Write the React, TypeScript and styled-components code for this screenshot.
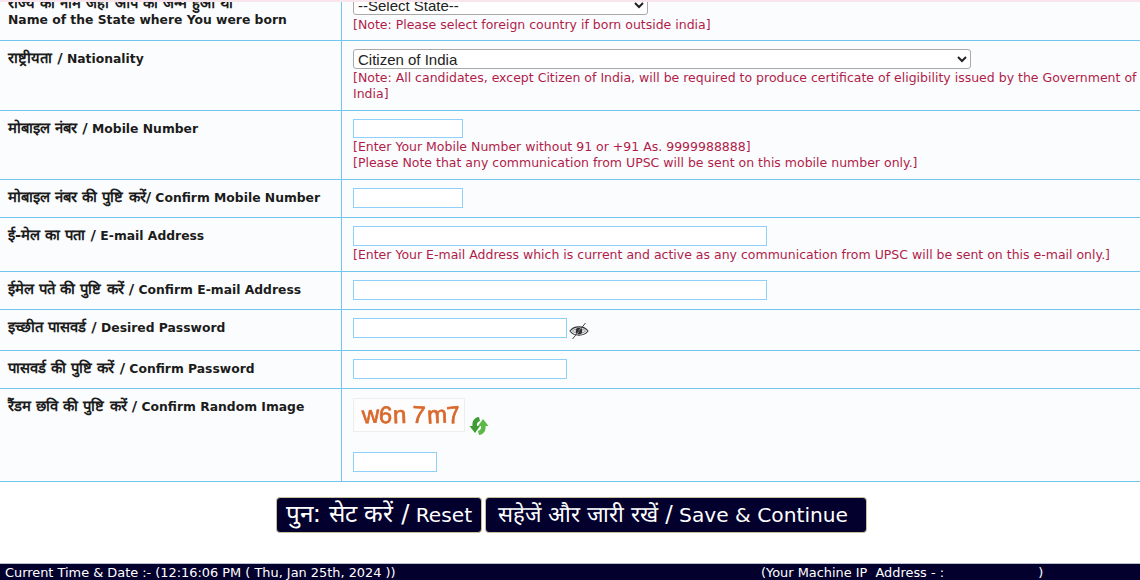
import { createGlobalStyle } from 'styled-components';
import styled from 'styled-components';

const GlobalStyle = createGlobalStyle`
  html, body {
    margin: 0;
    padding: 0;
    background: #fff;
    overflow: hidden;
  }
  body {
    font-family: "DejaVu Sans", Verdana, sans-serif;
  }
`;

const Page = styled.div`
  width: 1140px;
  height: 580px;
  display: flex;
  flex-direction: column;
  overflow: hidden;
`;
const TopStrip = styled.div`
  height: 2px;
  background: #f8e6ec;
`;
const Table = styled.div`
  background: #fbfcfd;
`;
const Row = styled.div<{ $h: number }>`
  display: grid;
  grid-template-columns: 342px 1fr;
  height: ${(p) => p.$h}px;
  box-sizing: border-box;
  border-bottom: 1px solid #72c5ee;
  overflow: hidden;
`;
const LabelCell = styled.div`
  box-sizing: border-box;
  padding: 9px 0 0 8px;
  border-right: 1px solid #72c5ee;
  font-size: 12.35px;
  line-height: 18px;
  font-weight: bold;
  color: #1c1c1c;
`;
const ClippedLabel = styled(LabelCell)`
  margin-top: -6px;
  padding-top: 0;
  line-height: 16px;
`;
const Hi = styled.span<{ $scale?: number }>`
  font-size: ${(p) => p.$scale ?? 1.2}em;
  line-height: 1;
`;
const FieldCell = styled.div`
  padding: 8px 0 0 11px;
`;
const ClippedField = styled(FieldCell)`
  margin-top: -7px;
  padding-top: 0;
`;
const Select = styled.select<{ $w: number }>`
  display: block;
  width: ${(p) => p.$w}px;
  height: 20px;
  box-sizing: border-box;
  padding: 0 0 1px;
  font-family: "Liberation Sans", Arial, sans-serif;
  font-size: 15px;
  color: #222;
  background: #fff;
  border: 1px solid #a9a9a9;
  border-radius: 3px;
`;
const TextInput = styled.input<{ $w: number; $h?: number }>`
  display: block;
  width: ${(p) => p.$w}px;
  height: ${(p) => p.$h ?? 20}px;
  box-sizing: border-box;
  padding: 0 2px;
  background: #fff;
  border: 1px solid #8fd0f8;
  outline: none;
`;
const Note = styled.div<{ $gap?: number }>`
  margin-top: ${(p) => p.$gap ?? 1}px;
  font-size: 12.5px;
  line-height: 16px;
  color: #b01c4a;
  white-space: pre-line;
`;
const PasswordLine = styled.div`
  display: flex;
  align-items: flex-start;
  gap: 2px;
`;
const EyeIcon = styled.svg`
  margin-top: 4px;
  width: 20px;
  height: 18px;
`;
const CaptchaLine = styled.div`
  display: flex;
  align-items: flex-end;
  gap: 4px;
  height: 36px;
`;
const Captcha = styled.div`
  width: 112px;
  height: 34px;
  box-sizing: border-box;
  margin-bottom: 1px;
  padding-left: 4px;
  background: #fdfdfd;
  border: 1px solid #eeeeee;
  display: flex;
  align-items: center;
  justify-content: center;
  color: #d9692c;
  font-family: "Liberation Sans", Arial, sans-serif;
  font-size: 24px;
  -webkit-text-stroke: 0.7px #d9692c;
  filter: blur(0.3px);
`;
const CaptchaChar = styled.span<{ $tilt: number; $gap?: number }>`
  display: inline-block;
  transform: rotate(${(p) => p.$tilt}deg);
  margin-left: ${(p) => p.$gap ?? 0}px;
`;
const RefreshIcon = styled.svg`
  width: 20px;
  height: 20px;
  margin-bottom: -3px;
`;
const CaptchaInput = styled(TextInput)`
  margin-top: 19px;
`;
const Actions = styled.div`
  height: 82px;
  box-sizing: border-box;
  padding: 15px 0 0 3px;
  display: flex;
  justify-content: center;
  align-items: flex-start;
  gap: 3px;
`;
const ActionButton = styled.button<{ $w: number; $right?: number }>`
  width: ${(p) => p.$w}px;
  height: 36px;
  padding: 0 ${(p) => p.$right ?? 0}px 0 0;
  background: #03002e;
  color: #fff;
  border: 1px solid #c9bf9a;
  border-radius: 4px;
  font-family: "DejaVu Sans", Verdana, sans-serif;
  font-size: 20.2px;
  white-space: nowrap;
`;
const Footer = styled.div`
  height: 16px;
  display: grid;
  grid-template-columns: 761px 1fr;
  background: #03002e;
  border-top: 1px solid #b8c0d0;
  color: #fff;
  font-size: 12.9px;
  line-height: 17px;
  white-space: pre;
`;
const FooterLeft = styled.div`
  padding-left: 5px;
`;

const App = () => {
  return (
    <Page>
      <GlobalStyle />
      <TopStrip />
      <Table>
        <Row $h={39}>
          <ClippedLabel>
            <Hi>राज्य का नाम जहां आप का जन्म हुआ था</Hi>
            <br />
            Name of the State where You were born
          </ClippedLabel>
          <ClippedField>
            <Select $w={295} defaultValue="s">
              <option value="s">--Select State--</option>
            </Select>
            <Note $gap={2}>[Note: Please select foreign country if born outside india]</Note>
          </ClippedField>
        </Row>
        <Row $h={70}>
          <LabelCell><Hi>राष्ट्रीयता /</Hi> Nationality</LabelCell>
          <FieldCell>
            <Select $w={618} defaultValue="c">
              <option value="c">Citizen of India</option>
            </Select>
            <Note>
              [Note: All candidates, except Citizen of India, will be required to produce certificate of eligibility issued by the Government of India]
            </Note>
          </FieldCell>
        </Row>
        <Row $h={69}>
          <LabelCell><Hi>मोबाइल नंबर /</Hi> Mobile Number</LabelCell>
          <FieldCell>
            <TextInput $w={110} $h={19} />
            <Note>
              {'[Enter Your Mobile Number without 91 or +91 As. 9999988888]\n[Please Note that any communication from UPSC will be sent on this mobile number only.]'}
            </Note>
          </FieldCell>
        </Row>
        <Row $h={38}>
          <LabelCell><Hi>मोबाइल नंबर की पुष्टि करें/</Hi> Confirm Mobile Number</LabelCell>
          <FieldCell>
            <TextInput $w={110} />
          </FieldCell>
        </Row>
        <Row $h={54}>
          <LabelCell><Hi>ई-मेल का पता /</Hi> E-mail Address</LabelCell>
          <FieldCell>
            <TextInput $w={414} />
            <Note>
              [Enter Your E-mail Address which is current and active as any communication from UPSC will be sent on this e-mail only.]
            </Note>
          </FieldCell>
        </Row>
        <Row $h={38}>
          <LabelCell><Hi>ईमेल पते की पुष्टि करें /</Hi> Confirm E-mail Address</LabelCell>
          <FieldCell>
            <TextInput $w={414} />
          </FieldCell>
        </Row>
        <Row $h={41}>
          <LabelCell><Hi>इच्छीत पासवर्ड /</Hi> Desired Password</LabelCell>
          <FieldCell>
            <PasswordLine>
              <TextInput $w={214} />
              <EyeIcon viewBox="0 0 20 18">
                <path d="M1 9 C5 3.5 15 3.5 19 9 C15 14.5 5 14.5 1 9 Z" fill="none" stroke="#333" strokeWidth="1.1" />
                <path d="M3.5 9 C6.5 6 13.5 6 16.5 9 C13.5 12 6.5 12 3.5 9 Z" fill="none" stroke="#555" strokeWidth="0.7" />
                <circle cx="10" cy="9" r="3.3" fill="#333" />
                <path d="M8 12 L12 6" stroke="#fff" strokeWidth="0.9" />
                <path d="M3.5 17 L16.5 1" stroke="#444" strokeWidth="1" />
              </EyeIcon>
            </PasswordLine>
          </FieldCell>
        </Row>
        <Row $h={38}>
          <LabelCell><Hi>पासवर्ड की पुष्टि करें /</Hi> Confirm Password</LabelCell>
          <FieldCell>
            <TextInput $w={214} />
          </FieldCell>
        </Row>
        <Row $h={93}>
          <LabelCell><Hi>रैंडम छवि की पुष्टि करें /</Hi> Confirm Random Image</LabelCell>
          <FieldCell>
            <CaptchaLine>
              <Captcha>
                <CaptchaChar $tilt={-4}>w</CaptchaChar>
                <CaptchaChar $tilt={3}>6</CaptchaChar>
                <CaptchaChar $tilt={-2}>n</CaptchaChar>
                <CaptchaChar $tilt={4} $gap={6}>7</CaptchaChar>
                <CaptchaChar $tilt={-3} $gap={1}>m</CaptchaChar>
                <CaptchaChar $tilt={-6}>7</CaptchaChar>
              </Captcha>
              <RefreshIcon viewBox="0 0 20 20">
                <path d="M10 1 C5 1.5 3 5.5 3.5 10 L0.5 10 L6 17 L11 10 L8 10 C7.6 7.5 8.5 5.5 11 5 Z" fill="#3f9c35" />
                <path d="M10 19 C15 18.5 17 14.5 16.5 10 L19.5 10 L14 3 L9 10 L12 10 C12.4 12.5 11.5 14.5 9 15 Z" fill="#5cb947" />
              </RefreshIcon>
            </CaptchaLine>
            <CaptchaInput $w={84} />
          </FieldCell>
        </Row>
      </Table>
      <Actions>
        <ActionButton $w={206}><Hi>पुन: सेट करें /</Hi> Reset</ActionButton>
        <ActionButton $w={382} $right={6}><Hi $scale={1.1}>सहेजें और जारी रखें /</Hi> Save &amp; Continue</ActionButton>
      </Actions>
      <Footer>
        <FooterLeft>Current Time &amp; Date :- (12:16:06 PM ( Thu, Jan 25th, 2024 ))</FooterLeft>
        <div>{'(Your Machine IP  Address - :                       )'}</div>
      </Footer>
    </Page>
  );
};

export default App;
